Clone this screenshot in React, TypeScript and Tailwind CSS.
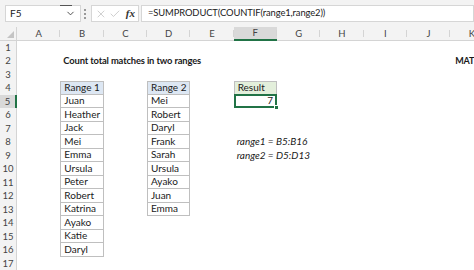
import { ChevronDown, X, Check } from 'lucide-react';

const COLS = ['A', 'B', 'C', 'D', 'E', 'F', 'G', 'H', 'I', 'J', 'K'];
const ROWS = Array.from({ length: 17 }, (_, i) => i + 1);

const range1 = ['Juan', 'Heather', 'Jack', 'Mei', 'Emma', 'Ursula', 'Peter', 'Robert', 'Katrina', 'Ayako', 'Katie', 'Daryl'];
const range2 = ['Mei', 'Robert', 'Daryl', 'Frank', 'Sarah', 'Ursula', 'Ayako', 'Juan', 'Emma'];

type Cell = { text?: string; cls?: string };

// build sheet content
const cells: Record<string, Cell> = {};
cells['B2'] = { text: 'Count total matches in two ranges', cls: 'font-bold text-[9.4px] tracking-[-0.15px] overflow-visible whitespace-nowrap' };
cells['K2'] = { text: 'MAT', cls: 'font-bold text-[9px] tracking-[-0.2px] whitespace-nowrap !pl-[5px]' };
cells['B4'] = { text: 'Range 1', cls: 'bg-[#dde7f3] border border-[#bfbfbf]' };
range1.forEach((n, i) => (cells['B' + (5 + i)] = { text: n, cls: 'border-x border-b border-[#bfbfbf]' }));
cells['D4'] = { text: 'Range 2', cls: 'bg-[#dde7f3] border border-[#bfbfbf]' };
range2.forEach((n, i) => (cells['D' + (5 + i)] = { text: n, cls: 'border-x border-b border-[#bfbfbf]' }));
cells['F4'] = { text: 'Result', cls: 'bg-[#e3efdb] border border-[#bfbfbf]' };
cells['F5'] = { text: '7', cls: 'text-right pr-[3px] border-x border-b border-[#bfbfbf]' };
cells['F8'] = { text: 'range1 = B5:B16', cls: 'italic whitespace-nowrap overflow-visible' };
cells['F9'] = { text: 'range2 = D5:D13', cls: 'italic whitespace-nowrap overflow-visible' };

export default function App() {
  return (
    <div className="w-[474px] h-[270px] overflow-hidden bg-white font-['Lato',sans-serif] text-[#1a1a1a]">
      {/* formula bar */}
      <div className="h-[27px] bg-[#f3f3f3] flex items-start pt-[5px] pl-[5px] gap-[2px]">
        <div className="relative w-[76px] h-[17px] bg-white border border-[#d6d6d6] flex items-center justify-between px-[4px] text-[10px]">
          <span>F5</span>
          <ChevronDown size={11} strokeWidth={2} className="text-[#444]" />
          <div className="absolute -top-[1px] right-[8px] w-[12px] h-[1px] bg-[#555]" />
        </div>
        <div className="flex flex-col gap-[2px] pt-[4px] px-[1px]">
          <div className="w-[2px] h-[2px] bg-[#999]" />
          <div className="w-[2px] h-[2px] bg-[#999]" />
          <div className="w-[2px] h-[2px] bg-[#999]" />
        </div>
        <div className="ml-[2px] w-[48px] h-[17px] bg-white border border-[#d6d6d6] flex items-center gap-[2px] px-[3px]">
          <X size={12} strokeWidth={1.3} className="text-[#b5b5b5]" />
          <Check size={12} strokeWidth={1.3} className="text-[#b5b5b5]" />
          <span className="font-['Liberation_Serif',serif] italic font-bold text-[11px] text-[#333] ml-[3px]">fx</span>
        </div>
        <div className="flex-1 h-[17px] bg-white border border-[#d6d6d6] flex items-center pl-[6px] text-[9.4px] tracking-[-0.1px] whitespace-nowrap">
          =SUMPRODUCT(COUNTIF(range1,range2))
        </div>
      </div>

      {/* sheet */}
      <div className="grid grid-cols-[17px_repeat(11,43.33px)] grid-rows-[repeat(18,13.5px)] text-[10px] leading-[13px]">
        {/* corner */}
        <div className="bg-[#f3f3f3] border-b border-r border-[#d4d4d4] relative">
          <div className="absolute right-[2px] bottom-[2px] w-0 h-0 border-l-[7px] border-l-transparent border-b-[7px] border-b-[#c4c4c4]" />
        </div>
        {COLS.map(c => (
          <div
            key={c}
            className={`flex items-center justify-center text-[9.5px] text-[#444] border-b relative ${
              c === 'F' ? 'bg-[#d9d9d9] border-b-[2px] border-[#217346] text-[#215a38]' : 'bg-[#f3f3f3] border-[#d4d4d4]'
            }`}
          >
            {c}
            <div className="absolute right-0 top-[3px] bottom-[3px] w-px bg-[#d4d4d4]" />
          </div>
        ))}
        {ROWS.map(r => (
          <RowCells key={r} r={r} />
        ))}
      </div>
    </div>
  );
}

function RowCells({ r }: { r: number }) {
  return (
    <>
      <div
        className={`flex items-center justify-center text-[9.5px] text-[#444] ${
          r === 5 ? 'bg-[#d9d9d9] border-r-[2px] border-[#217346] text-[#215a38]' : 'bg-[#f3f3f3] border-r border-[#d4d4d4]'
        }`}
      >
        {r}
      </div>
      {COLS.map(c => {
        const key = c + r;
        const cell = cells[key];
        const sel = key === 'F5';
        return (
          <div key={key} className={`relative pl-[3px] flex items-center ${cell?.cls ?? ''}`}>
            <span className={`w-full ${cell?.cls?.includes('text-right') ? 'text-right' : ''}`}>{cell?.text}</span>
            {sel && (
              <>
                <div className="absolute -left-px -top-px -right-px -bottom-px border-[2px] border-[#217346]" />
                <div className="absolute -right-[3px] -bottom-[3px] w-[5px] h-[5px] bg-[#217346] border border-white" />
              </>
            )}
          </div>
        );
      })}
    </>
  );
}
